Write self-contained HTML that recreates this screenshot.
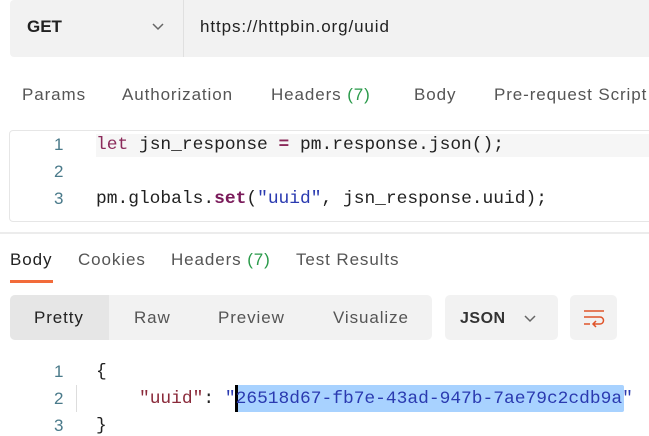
<!DOCTYPE html>
<html><head><style>
body{margin:0;width:649px;height:430px;overflow:hidden;background:#fff;font-family:"Liberation Sans",sans-serif;position:relative;color:#212121}
.a{position:absolute;white-space:pre}
.s{letter-spacing:0.9px}
.mono{font-family:"Liberation Mono","DejaVu Sans Mono",monospace;font-size:17.9px}
.ln{color:#4a7a8a;font-size:17px}
</style></head><body>
<div class="a" style="left:10px;top:0;width:650px;height:57px;background:#f2f2f2;border-radius:4px"></div>
<div class="a" style="left:183px;top:0;width:1px;height:57px;background:#e0e0e0"></div>
<div class="a" style="left:27px;top:17px;font-size:17px;font-weight:bold;color:#222">GET</div>
<svg class="a" style="left:151px;top:22px" width="14" height="10"><path d="M2 2l5 5 5-5" stroke="#666" stroke-width="1.5" fill="none"/></svg>
<div class="a s" style="left:200px;top:17px;font-size:17px;color:#222">https://httpbin.org/uuid</div>

<div class="a s" style="left:22px;top:85px;font-size:17px;color:#555">Params</div>
<div class="a s" style="left:122px;top:85px;font-size:17px;color:#555">Authorization</div>
<div class="a s" style="left:271px;top:85px;font-size:17px;color:#555">Headers <span style="color:#2a9a4a">(7)</span></div>
<div class="a s" style="left:414px;top:85px;font-size:17px;color:#555">Body</div>
<div class="a s" style="left:494px;top:85px;font-size:17px;color:#555">Pre-request Script</div>

<div class="a" style="left:9px;top:130px;width:650px;height:90px;border:1px solid #e6e6e6;border-radius:4px"></div>
<div class="a" style="left:96px;top:134px;width:560px;height:23px;background:#f6f6f6"></div>
<div class="a ln" style="left:54px;top:135px">1</div>
<div class="a ln" style="left:54px;top:162px">2</div>
<div class="a ln" style="left:54px;top:189px">3</div>
<div class="a mono" style="left:96px;top:135px"><span style="color:#8a2a5a">let</span> jsn_response <span style="color:#8a2a5a;font-weight:bold">=</span> pm.response.json();</div>
<div class="a mono" style="left:96px;top:189px">pm.globals.<span style="color:#7a1a5a;font-weight:bold">set</span>(<span style="color:#2a3ab0">"uuid"</span>, jsn_response.uuid);</div>

<div class="a" style="left:0;top:232px;width:649px;height:2px;background:#ececec"></div>
<div class="a s" style="left:10px;top:250px;font-size:17px;color:#222">Body</div>
<div class="a s" style="left:78px;top:250px;font-size:17px;color:#555">Cookies</div>
<div class="a s" style="left:171px;top:250px;font-size:17px;color:#555">Headers <span style="color:#2a9a4a">(7)</span></div>
<div class="a s" style="left:296px;top:250px;font-size:17px;color:#555">Test Results</div>
<div class="a" style="left:10px;top:280px;width:43px;height:3px;background:#f26b3a"></div>

<div class="a" style="left:10px;top:295px;width:422px;height:45px;background:#f2f2f2;border-radius:5px"></div>
<div class="a" style="left:10px;top:295px;width:99px;height:45px;background:#e6e6e6;border-radius:5px 0 0 5px"></div>
<div class="a s" style="left:34px;top:308px;font-size:17px;color:#222">Pretty</div>
<div class="a s" style="left:134px;top:308px;font-size:17px;color:#555">Raw</div>
<div class="a s" style="left:218px;top:308px;font-size:17px;color:#555">Preview</div>
<div class="a s" style="left:333px;top:308px;font-size:17px;color:#555">Visualize</div>
<div class="a" style="left:445px;top:295px;width:113px;height:45px;background:#f2f2f2;border-radius:5px"></div>
<div class="a" style="left:460px;top:310px;font-size:16px;font-weight:bold;color:#333;letter-spacing:0.5px">JSON</div>
<svg class="a" style="left:523px;top:314px" width="14" height="10"><path d="M2 2l5 5 5-5" stroke="#666" stroke-width="1.5" fill="none"/></svg>
<div class="a" style="left:570px;top:295px;width:47px;height:45px;background:#f2f2f2;border-radius:5px"></div>
<svg class="a" style="left:582px;top:307px" width="24" height="22"><path d="M2 4h20M2 10h16a3.5 3.5 0 0 1 0 7h-6M14 14l-3 3 3 3M2 17h6" stroke="#e0542a" stroke-width="1.5" fill="none"/></svg>

<div class="a ln" style="left:54px;top:362px">1</div>
<div class="a ln" style="left:54px;top:389px">2</div>
<div class="a ln" style="left:54px;top:416px">3</div>
<div class="a" style="left:76px;top:385px;width:1px;height:27px;background:#ddd"></div>
<div class="a" style="left:236px;top:385px;width:388px;height:27px;background:#a8d2ff;border-radius:2px"></div>
<div class="a" style="left:235px;top:385px;width:3px;height:27px;background:#000"></div>
<div class="a mono" style="left:96px;top:362px">{</div>
<div class="a mono" style="left:96px;top:389px">    <span style="color:#8a2a3a">"uuid"</span>: <span style="color:#2a3ab0">"26518d67-fb7e-43ad-947b-7ae79c2cdb9a"</span></div>
<div class="a mono" style="left:96px;top:416px">}</div>
</body></html>
